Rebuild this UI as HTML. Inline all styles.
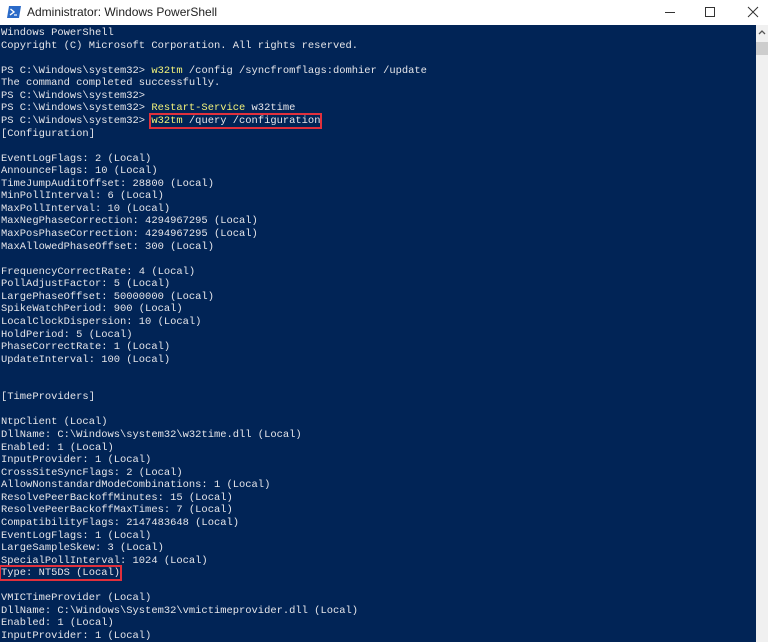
<!DOCTYPE html>
<html><head><meta charset="utf-8"><style>
*{margin:0;padding:0}
body{width:768px;height:642px;overflow:hidden;background:#fff;position:relative;font-family:"Liberation Sans",sans-serif}
.tb{position:absolute;left:0;top:0;width:768px;height:25px;background:#fff}
.tt{position:absolute;left:27px;top:5px;font-size:12px;color:#222}
.term{position:absolute;left:0;top:25px;width:756px;height:617px;background:#012456;overflow:hidden}
pre{position:absolute;left:1px;top:2px;font-family:"Liberation Mono",monospace;font-size:10.45px;line-height:12.56px;color:#e6e6ea;white-space:pre}
.y{color:#f2f27a}
.box{outline:2px solid #e0303c;outline-offset:0}
.sb{position:absolute;left:756px;top:25px;width:12px;height:617px;background:#f0f0f0}
</style></head><body>
<div class="tb">
<svg style="position:absolute;left:7px;top:6px" width="14" height="12" viewBox="0 0 14 12"><path d="M2 0H14L12 12H0Z" fill="#2a6ac8"/><path d="M3.5 3L7 6L3 9" stroke="#fff" stroke-width="1.4" fill="none"/><path d="M7 9H10" stroke="#fff" stroke-width="1.2"/></svg>
<div class="tt">Administrator: Windows PowerShell</div>
<svg style="position:absolute;left:664px;top:6px" width="100" height="14"><path d="M1 6.5H11" stroke="#333"/><path d="M41.5 1.5h9v9h-9z" stroke="#333" fill="none"/><path d="M84 1L94 11M94 1L84 11" stroke="#333"/></svg>
</div>
<div class="term"><pre>Windows PowerShell
Copyright (C) Microsoft Corporation. All rights reserved.

PS C:\Windows\system32&gt; <span class="y">w32tm</span> /config /syncfromflags:domhier /update
The command completed successfully.
PS C:\Windows\system32&gt;
PS C:\Windows\system32&gt; <span class="y">Restart-Service</span> w32time
PS C:\Windows\system32&gt; <span class="box"><span class="y">w32tm</span> /query /configuration</span>
[Configuration]

EventLogFlags: 2 (Local)
AnnounceFlags: 10 (Local)
TimeJumpAuditOffset: 28800 (Local)
MinPollInterval: 6 (Local)
MaxPollInterval: 10 (Local)
MaxNegPhaseCorrection: 4294967295 (Local)
MaxPosPhaseCorrection: 4294967295 (Local)
MaxAllowedPhaseOffset: 300 (Local)

FrequencyCorrectRate: 4 (Local)
PollAdjustFactor: 5 (Local)
LargePhaseOffset: 50000000 (Local)
SpikeWatchPeriod: 900 (Local)
LocalClockDispersion: 10 (Local)
HoldPeriod: 5 (Local)
PhaseCorrectRate: 1 (Local)
UpdateInterval: 100 (Local)


[TimeProviders]

NtpClient (Local)
DllName: C:\Windows\system32\w32time.dll (Local)
Enabled: 1 (Local)
InputProvider: 1 (Local)
CrossSiteSyncFlags: 2 (Local)
AllowNonstandardModeCombinations: 1 (Local)
ResolvePeerBackoffMinutes: 15 (Local)
ResolvePeerBackoffMaxTimes: 7 (Local)
CompatibilityFlags: 2147483648 (Local)
EventLogFlags: 1 (Local)
LargeSampleSkew: 3 (Local)
SpecialPollInterval: 1024 (Local)
<span class="box">Type: NT5DS (Local)</span>

VMICTimeProvider (Local)
DllName: C:\Windows\System32\vmictimeprovider.dll (Local)
Enabled: 1 (Local)
InputProvider: 1 (Local)</pre></div>
<div class="sb">
<svg style="position:absolute;left:2px;top:4px" width="8" height="6"><path d="M1 5L4 2L7 5" stroke="#555" fill="none" stroke-width="1.3"/></svg>
<div style="position:absolute;left:0;top:17px;width:12px;height:13px;background:#cdcdcd"></div>
</div>
</body></html>
